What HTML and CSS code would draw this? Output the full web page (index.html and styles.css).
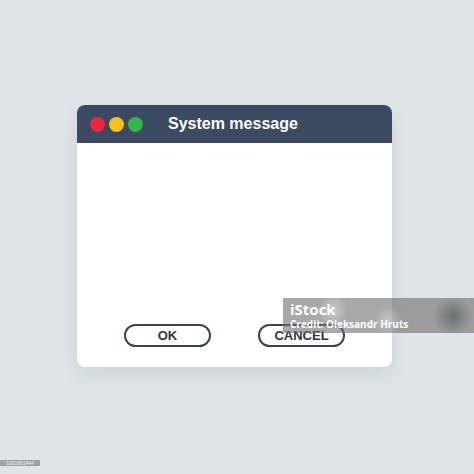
FILE: index.html
```html
<!DOCTYPE html>
<html lang="en">
<head>
  <meta charset="UTF-8" />
  <meta name="viewport" content="width=device-width, initial-scale=1.0"/>
  <title>System message</title>
  <link rel="stylesheet" href="styles.css">
</head>
<body>
  <div class="window">
    <div class="titlebar">
      <div class="dots">
        <span class="dot red"></span>
        <span class="dot yellow"></span>
        <span class="dot green"></span>
      </div>
      <h1>System message</h1>
    </div>
    <div class="content">
      <div class="actions">
        <button class="button">OK</button>
        <button class="button">CANCEL</button>
      </div>
    </div>
  </div>

  <div class="watermark">
    <div class="brand">iStock</div>
    <div class="credit">Credit: Oleksandr Hruts</div>
  </div>

  <div class="stock-id">1081663444</div>
</body>
</html>
```

FILE: styles.css
```css
body {
  margin: 0;
  width: 474px;
  height: 474px;
  overflow: hidden;
  font-family: 'Liberation Sans', Arial, sans-serif;
  background: #dee4e7;
  padding: 105px 0 0 77px;
  box-sizing: border-box;
  position: relative;
}

.window {
  width: 315px;
  height: 262px;
  background: #ffffff;
  border-radius: 8px;
  overflow: hidden;
  display: flex;
  flex-direction: column;
  box-shadow: 0 8px 18px rgba(60, 80, 90, 0.10);
}

.titlebar {
  height: 38px;
  background: #3b4961;
  display: flex;
  align-items: center;
  padding-left: 13px;
}

.dots {
  display: flex;
  gap: 4px;
}

.dot {
  width: 15px;
  height: 15px;
  border-radius: 50%;
}

.red { background: #f0243f; }
.yellow { background: #f8c11a; }
.green { background: #35b549; }

.titlebar h1 {
  margin: 0 0 0 25px;
  font-size: 16px;
  font-weight: bold;
  color: #ffffff;
  padding-bottom: 1px;
}

.content {
  flex: 1;
  display: flex;
  flex-direction: column;
  justify-content: flex-end;
  padding-bottom: 20px;
}

.actions {
  display: flex;
  justify-content: center;
  gap: 47px;
}

.button {
  width: 87px;
  height: 23px;
  padding: 0;
  background: #ffffff;
  border: 2px solid #3b4352;
  border-radius: 12px;
  font-family: 'Liberation Sans', Arial, sans-serif;
  font-size: 13px;
  font-weight: bold;
  color: #2f3540;
}

.watermark {
  position: absolute;
  left: 283px;
  top: 298px;
  width: 191px;
  height: 35px;
  box-sizing: border-box;
  padding: 4px 0 0 7px;
  color: #ffffff;
  background:
    radial-gradient(circle at 50px 12px, rgba(230, 230, 240, 0.55) 0, rgba(230, 230, 240, 0) 16px),
    radial-gradient(circle at 105px 22px, rgba(220, 220, 230, 0.5) 0, rgba(220, 220, 230, 0) 14px),
    radial-gradient(circle at 170px 18px, rgba(60, 70, 70, 0.5) 0, rgba(60, 70, 70, 0) 20px),
    rgba(110, 110, 110, 0.6);
}

.brand {
  font-family: 'Open Sans', sans-serif;
  font-size: 15px;
  font-weight: bold;
  line-height: 14px;
}

.credit {
  margin-top: 3px;
  font-family: 'Open Sans', sans-serif;
  font-size: 10px;
  font-weight: bold;
  line-height: 11px;
}

.stock-id {
  position: absolute;
  left: 0;
  top: 460px;
  width: 40px;
  height: 6px;
  background: #9ea3a6;
  color: #f0f0f0;
  font-size: 5px;
  line-height: 6px;
  text-align: center;
}
```
